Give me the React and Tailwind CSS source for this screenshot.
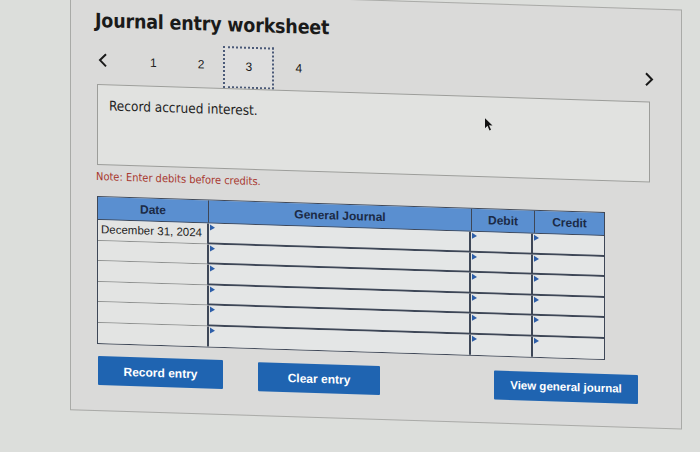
import React from "react";

const Flag = () => (
  <span className="absolute left-[1px] top-[1px] w-0 h-0 border-t-[3px] border-b-[3px] border-l-[5px] border-t-transparent border-b-transparent border-l-[#2d5ea8]" />
);

export default function App() {
  const rows = [0, 1, 2, 3, 4, 5];
  return (
    <div className="w-[700px] h-[452px] overflow-hidden bg-[#dcdedb]">
      <div className="origin-top-left skew-y-[1.8deg]">
        <div className="ml-[70px] -mt-[12px] w-[612px] h-[420px] border border-[#a9aaa7] bg-[#dadad9] pl-[24px] pt-[15px] relative">
          <h1
            className="text-[19.5px] leading-[28px] font-bold text-[#1a1a1a] tracking-[-0.2px]"
            style={{ fontFamily: '"DejaVu Sans Condensed", "DejaVu Sans", sans-serif', fontStretch: "condensed" }}
          >
            Journal entry worksheet
          </h1>
          <div className="flex items-center h-[42px] mt-[7px] text-[12px] text-[#1a1a1a]" style={{ fontFamily: '"Liberation Sans", sans-serif' }}>
            <svg width="12" height="16" viewBox="0 0 12 16" className="ml-[2px] -mt-[6px]">
              <path d="M9 2 L3 8 L9 14" fill="none" stroke="#1a1a1a" strokeWidth="2" />
            </svg>
            <span className="ml-[41px] -mt-[4px]">1</span>
            <span className="ml-[41px] -mt-[4px]">2</span>
            <div className="ml-[19px] w-[51px] h-[42px] border-2 border-dotted border-[#4b5a78] bg-[#dedede] flex items-center justify-center pb-[3px]">3</div>
            <span className="ml-[21px] -mt-[2px]">4</span>
            <svg width="12" height="16" viewBox="0 0 12 16" className="ml-auto mr-[26px] -mt-[2px]">
              <path d="M3 2 L9 8 L3 14" fill="none" stroke="#1a1a1a" strokeWidth="2" />
            </svg>
          </div>
          <div className="relative ml-[2px] w-[553px] h-[81px] border border-[#9c9d9a] bg-[#e1e2e0] pl-[11px] pt-[10px]">
            <p
              className="text-[13.5px] leading-[20px] text-[#1e1e1e]"
              style={{ fontFamily: '"DejaVu Sans Condensed", "DejaVu Sans", sans-serif', fontStretch: "condensed" }}
            >
              Record accrued interest.
            </p>
            <svg width="9" height="14" viewBox="0 0 9 14" className="absolute left-[386px] top-[20px]">
              <path d="M1 1 L1 11 L3.5 8.5 L5.5 13 L7 12.3 L5 8 L8.5 8 Z" fill="#111" />
            </svg>
          </div>
          <p
            className="mt-[4px] ml-[1px] text-[11px] leading-[16px] text-[#a8372e]"
            style={{ fontFamily: '"DejaVu Sans Condensed", "DejaVu Sans", sans-serif', fontStretch: "condensed" }}
          >
            Note: Enter debits before credits.
          </p>
          <div className="mt-[11px] ml-[2px] w-[508px] border border-[#3e4757]" style={{ fontFamily: '"Liberation Sans", sans-serif' }}>
            <div className="flex h-[23px] bg-[#5a8fd0] border-b border-[#3e4757] text-[12px] font-bold text-[#1b2a45]">
              <div className="w-[111px] border-r border-[#3e4757] flex items-center justify-center">Date</div>
              <div className="w-[263px] border-r border-[#3e4757] flex items-center justify-center">General Journal</div>
              <div className="w-[63px] border-r border-[#3e4757] flex items-center justify-center">Debit</div>
              <div className="flex-1 flex items-center justify-center">Credit</div>
            </div>
            {rows.map((r) => (
              <div key={r} className="flex h-[20.5px]">
                <div className={`w-[111px] border-r-2 border-[#3e4757] bg-[#e3e4e3] flex items-center pl-[3px] text-[11.5px] text-[#1e1e1e] ${r < 5 ? "border-b border-b-[#8d8f8e]" : ""}`}>
                  {r === 0 ? "December 31, 2024" : ""}
                </div>
                <div className={`relative w-[262px] border-r-2 border-[#3e4757] bg-[#e4e6e6] ${r < 5 ? "border-b-2" : ""}`}>
                  <Flag />
                </div>
                <div className={`relative w-[62px] border-r-2 border-[#3e4757] bg-[#e4e6e6] ${r < 5 ? "border-b-2" : ""}`}>
                  <Flag />
                </div>
                <div className={`relative flex-1 border-[#3e4757] bg-[#e4e6e6] ${r < 5 ? "border-b-2" : ""}`}>
                  <Flag />
                </div>
              </div>
            ))}
          </div>
          <div className="flex items-start mt-[12px] ml-[3px] text-[12px] font-bold text-white" style={{ fontFamily: '"Liberation Sans", sans-serif' }}>
            <button className="w-[125px] h-[29px] bg-[#1f64b1] rounded-[1px] flex items-center justify-center">Record entry</button>
            <button className="ml-[35px] mt-[1px] w-[122px] h-[29px] bg-[#1f64b1] rounded-[1px] flex items-center justify-center">Clear entry</button>
            <button className="ml-[114px] mt-[2px] w-[144px] h-[29px] bg-[#1f64b1] rounded-[1px] flex items-center justify-center text-[11.5px]">View general journal</button>
          </div>
        </div>
      </div>
    </div>
  );
}
